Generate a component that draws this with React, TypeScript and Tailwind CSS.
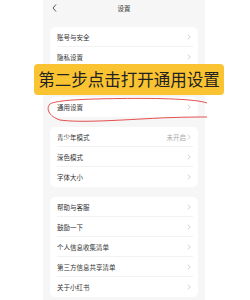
import type { ReactNode } from "react";

const FONT = { fontFamily: '"Noto Sans CJK SC", "Noto Sans", sans-serif' };

function Chevron() {
  return (
    <svg width="4" height="6" viewBox="0 0 4 6" className="shrink-0">
      <path d="M0.8 0.6 L3.2 3 L0.8 5.4" fill="none" stroke="#c4c4c4" strokeWidth="0.8" />
    </svg>
  );
}

function Row({ label, value, last }: { label: string; value?: string; last?: boolean }) {
  return (
    <div className="relative flex h-[20px] items-center justify-between pl-[7px] pr-[7px]">
      <span className="text-[6.5px] leading-none text-[#333]">{label}</span>
      <span className="flex items-center gap-[1px]">
        {value && <span className="text-[6.5px] leading-none text-[#aaa]">{value}</span>}
        <Chevron />
      </span>
      {!last && <div className="absolute bottom-0 left-[7px] right-[5px] h-px bg-[#f2f2f2]" />}
    </div>
  );
}

function Card({ children }: { children: ReactNode }) {
  return <div className="rounded-[5px] bg-white">{children}</div>;
}

export default function App() {
  return (
    <div className="relative h-[300px] w-[250px] overflow-hidden bg-white" style={FONT}>
      {/* 手机截图区域 */}
      <div className="ml-[43px] h-full w-[162px] bg-[#f6f6f6] px-[7px]">
        <div className="relative flex h-[16px] items-center">
          <svg width="5" height="8" viewBox="0 0 5 8" className="ml-[2px]">
            <path d="M4 0.5 L1 4 L4 7.5" fill="none" stroke="#444" strokeWidth="0.9" />
          </svg>
          <span className="absolute left-1/2 -translate-x-1/2 text-[6.5px] leading-none text-[#333]">设置</span>
        </div>
        <div className="mt-[11px] flex flex-col gap-[10px]">
          <Card>
            <Row label="账号与安全" />
            <Row label="隐私设置" />
            {/* 被提示条盖住的一行 */}
            <div className="h-[20px]" />
          </Card>
          <Card>
            <Row label="通用设置" last />
          </Card>
          <Card>
            <Row label="青少年模式" value="未开启" />
            <Row label="深色模式" />
            <Row label="字体大小" last />
          </Card>
          <Card>
            <Row label="帮助与客服" />
            <Row label="鼓励一下" />
            <Row label="个人信息收集清单" />
            <Row label="第三方信息共享清单" />
            <Row label="关于小红书" last />
          </Card>
        </div>
      </div>

      {/* 提示条 */}
      <div className="absolute left-[34px] top-[64px] flex h-[31px] w-[190px] items-center justify-center rounded-[4px] bg-[#fac331]">
        <span className="text-[16.5px] leading-none text-[#222]">第二步点击打开通用设置</span>
      </div>

      {/* 红色圈 */}
      <svg className="absolute left-0 top-0" width="250" height="300" viewBox="0 0 250 300">
        <path
          d="M207 103 C196 99 160 98 120 98.5 C85 99 56 100 50 104 C46 108 48 116 60 120 C80 123 120 120 160 118 C185 117 200 117 207 117"
          fill="none"
          stroke="#e23b3b"
          strokeWidth="0.9"
        />
      </svg>
    </div>
  );
}
